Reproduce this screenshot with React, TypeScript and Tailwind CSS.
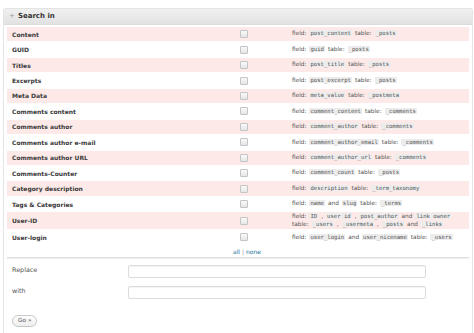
import React from "react";

type Part = { t: string; code?: boolean; br?: boolean };

interface Row {
  label: string;
  parts: Part[];
  tall?: boolean;
}

const c = (t: string): Part => ({ t, code: true });
const p = (t: string): Part => ({ t });
const br: Part = { t: "", br: true };

const rows: Row[] = [
  { label: "Content", parts: [p("field:"), c("post_content"), p("table:"), c("_posts")] },
  { label: "GUID", parts: [p("field:"), c("guid"), p("table:"), c("_posts")] },
  { label: "Titles", parts: [p("field:"), c("post_title"), p("table:"), c("_posts")] },
  { label: "Excerpts", parts: [p("field:"), c("post_excerpt"), p("table:"), c("_posts")] },
  { label: "Meta Data", parts: [p("field:"), c("meta_value"), p("table:"), c("_postmeta")] },
  { label: "Comments content", parts: [p("field:"), c("comment_content"), p("table:"), c("_comments")] },
  { label: "Comments author", parts: [p("field:"), c("comment_author"), p("table:"), c("_comments")] },
  { label: "Comments author e-mail", parts: [p("field:"), c("comment_author_email"), p("table:"), c("_comments")] },
  { label: "Comments author URL", parts: [p("field:"), c("comment_author_url"), p("table:"), c("_comments")] },
  { label: "Comments-Counter", parts: [p("field:"), c("comment_count"), p("table:"), c("_posts")] },
  { label: "Category description", parts: [p("field:"), c("description"), p("table:"), c("_term_taxonomy")] },
  { label: "Tags & Categories", parts: [p("field:"), c("name"), p("and"), c("slug"), p("table:"), c("_terms")] },
  {
    label: "User-ID",
    tall: true,
    parts: [
      p("field:"), c("ID"), p(","), c("user id"), p(","), c("post_author"), p("and"), c("link owner"), br,
      p("table:"), c("_users"), p(","), c("_usermeta"), p(","), c("_posts"), p("and"), c("_links"),
    ],
  },
  { label: "User-login", parts: [p("field:"), c("user_login"), p("and"), c("user_nicename"), p("table:"), c("_users")] },
];

function Field({ parts }: { parts: Part[] }) {
  return (
    <div className="leading-[7.5px]">
      {parts.map((x, i) =>
        x.br ? (
          <br key={i} />
        ) : x.code ? (
          <span key={i} className="bg-[#ececec] px-[1px] mr-[3px] font-['DejaVu_Sans_Mono',monospace] text-[5.6px] text-[#555]">
            {x.t}
          </span>
        ) : (
          <span key={i} className="mr-[3px]">{x.t}</span>
        ),
      )}
    </div>
  );
}

export default function App() {
  return (
    <div className="w-[474px] h-[333px] overflow-hidden bg-white font-['DejaVu_Sans',sans-serif] text-[#333] pt-[8px]">
      <div className="ml-[3px] mr-[1px] h-[325px] border-l border-t border-r border-[#e4e4e4] rounded-t-[3px]">
        {/* header */}
        <div className="h-[16px] flex items-center pl-[5px] bg-gradient-to-b from-[#f0f0f0] to-[#e2e2e2] border-b border-[#dcdcdc] text-[7px] font-bold">
          <span className="text-[#999] font-normal mr-[3px]">+</span>
          Search in
        </div>

        <div className="px-[3px] pt-[2px]">
          <div className="border-b border-[#dedede] shadow-[0_1px_1px_rgba(0,0,0,0.06)]">
            {rows.map((r, i) => (
              <div
                key={r.label}
                className={`grid grid-cols-[229px_50px_1fr] items-center border-b border-white ${r.tall ? "h-[18px]" : "h-[15.45px]"} ${i % 2 === 0 ? "bg-[#fdeae8]" : "bg-white"}`}
              >
                <div className="pl-[5px] text-[6px] font-bold text-[#3a3a3a] whitespace-nowrap">{r.label}</div>
                <div className="flex justify-start pl-[4px]">
                  <span className="w-[8px] h-[8px] border border-[#c4c4c4] rounded-[1px] bg-gradient-to-b from-[#fafafa] to-[#e6e6e6]" />
                </div>
                <div className="pl-[6px] text-[5.8px] text-[#555] whitespace-nowrap">
                  <Field parts={r.parts} />
                </div>
              </div>
            ))}
            <div className="h-[11px] flex items-center pl-[226px] text-[6px] text-[#21759b]">
              all <span className="text-[#999] mx-[2px]">|</span> none
            </div>
          </div>
        </div>

        {/* replace form */}
        <div className="pl-[8px] pt-[7px] text-[6.4px] text-[#555]">
          <div className="flex items-center h-[13px]">
            <span className="w-[116px]">Replace</span>
            <span className="w-[298px] h-[13px] border border-[#dcdcdc] rounded-[2px] bg-white shadow-[inset_0_1px_1px_rgba(0,0,0,0.05)]" />
          </div>
          <div className="flex items-center h-[13px] mt-[8px]">
            <span className="w-[116px]">with</span>
            <span className="w-[298px] h-[13px] border border-[#dcdcdc] rounded-[2px] bg-white shadow-[inset_0_1px_1px_rgba(0,0,0,0.05)]" />
          </div>
          <div className="mt-[16px]">
            <span className="inline-flex items-center h-[12px] px-[5px] border border-[#c8c8c8] rounded-full bg-gradient-to-b from-white to-[#ededed] text-[5.8px] text-[#555]">
              Go »
            </span>
          </div>
        </div>
      </div>
    </div>
  );
}
